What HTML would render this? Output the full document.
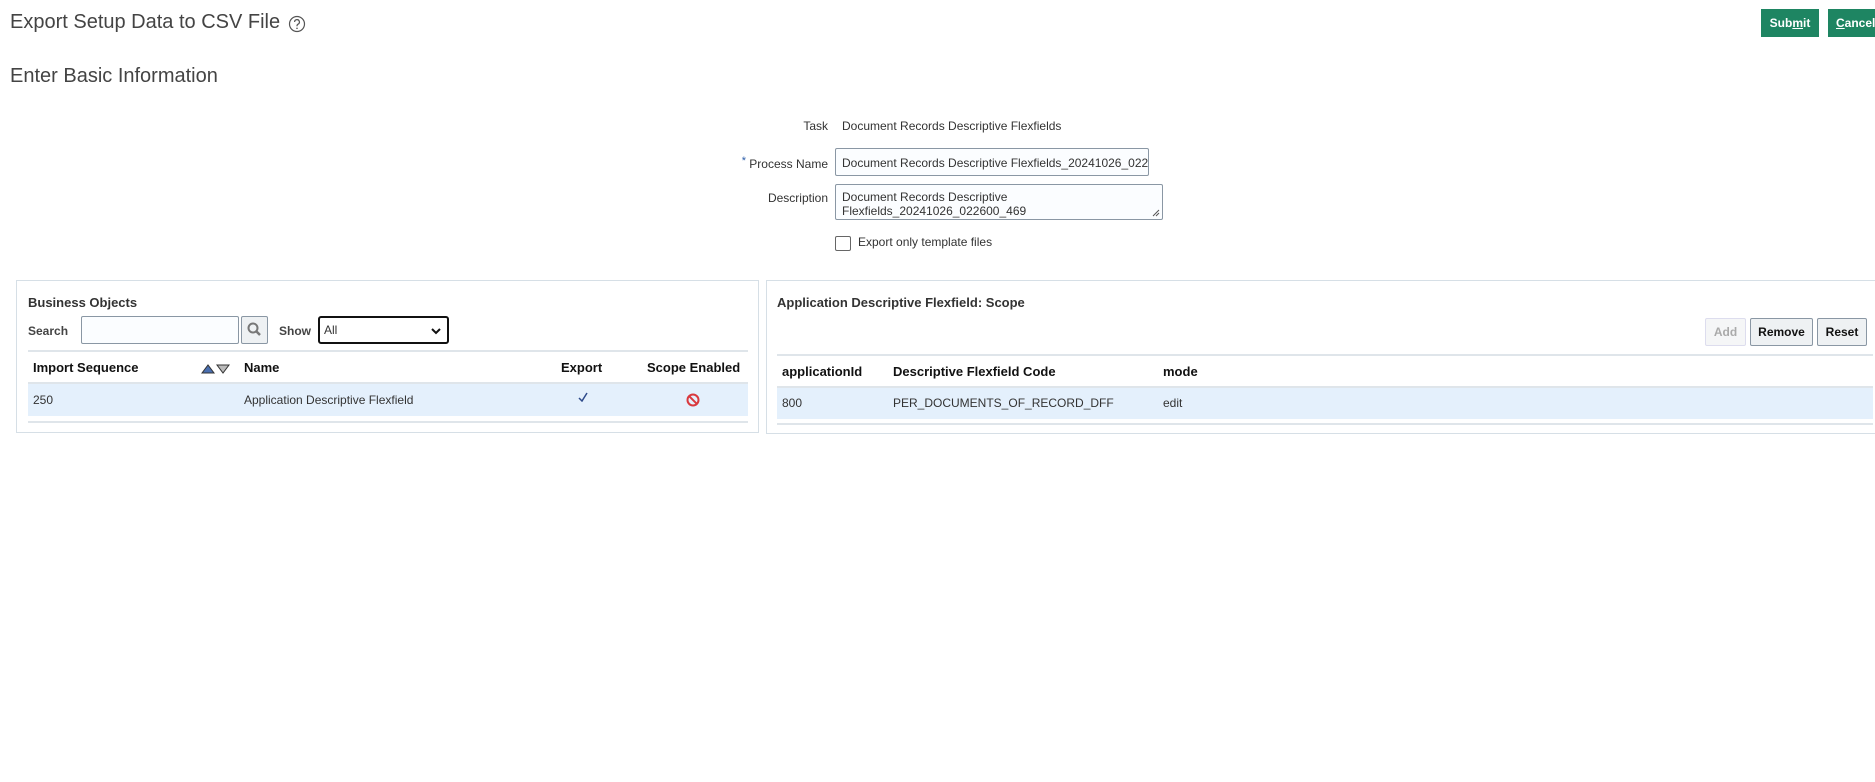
<!DOCTYPE html>
<html><head><meta charset="utf-8"><style>
*{box-sizing:border-box;margin:0;padding:0}
body{width:1875px;height:782px;background:#fff;font-family:"Liberation Sans",Arial,sans-serif;color:#333;position:relative;overflow:hidden;font-size:12px}
.a{position:absolute;white-space:nowrap}
.h1{font-size:20px;color:#444}
.btn{position:absolute;background:#1e8562;color:#fff;font-weight:bold;font-size:13px;height:28px;line-height:28px;text-align:center}
.lbl{font-size:12px;color:#333}
.inp{position:absolute;border:1px solid #8a97a4;background:#fbfdff;border-radius:2px}
.panel{position:absolute;border:1px solid #d6dfe6}
.hl{position:absolute;height:2px;background:#dfe5ea}
.th{font-weight:bold;font-size:13px;color:#111}
.sbtn{position:absolute;height:28px;line-height:26px;border:1px solid #8a97a4;background:#eef1f3;font-weight:bold;font-size:12px;color:#111;text-align:center;border-radius:2px}
</style></head><body>
<div class="a h1" style="left:10px;top:11px">Export Setup Data to CSV File</div>
<svg class="a" style="left:288px;top:15px" width="18" height="18" viewBox="0 0 18 18"><circle cx="9" cy="9" r="7.5" fill="none" stroke="#555" stroke-width="1.2"/><path d="M6.6 7a2.4 2.4 0 1 1 3.4 2.2c-.7.4-1 .8-1 1.6v.4" fill="none" stroke="#555" stroke-width="1.2"/><circle cx="9" cy="13.3" r=".8" fill="#555"/></svg>
<div class="btn" style="left:1761px;top:9px;width:58px;font-size:12px">Sub<u>m</u>it</div>
<div class="btn" style="left:1828px;top:9px;width:60px;text-align:left;padding-left:8px;font-size:12px"><u>C</u>ancel</div>
<div class="a h1" style="left:10px;top:65px">Enter Basic Information</div>

<div class="a lbl" style="right:1047px;top:119px">Task</div>
<div class="a" style="left:842px;top:119px">Document Records Descriptive Flexfields</div>
<div class="a lbl" style="right:1047px;top:155px"><span style="color:#2a5ca8;vertical-align:4px;font-size:11px">*</span> Process Name</div>
<div class="inp" style="left:835px;top:148px;width:314px;height:28px;overflow:hidden"><div class="a" style="left:6px;top:7px">Document Records Descriptive Flexfields_20241026_022600_469</div></div>
<div class="a lbl" style="right:1047px;top:191px">Description</div>
<div class="inp" style="left:835px;top:184px;width:328px;height:36px"><div class="a" style="left:6px;top:5px;line-height:14px">Document Records Descriptive<br>Flexfields_20241026_022600_469</div>
<svg class="a" style="right:2px;bottom:2px" width="8" height="8"><path d="M1 7L7 1M4 7L7 4" stroke="#555"/></svg></div>
<div class="a" style="left:835px;top:236px;width:16px;height:15px;border:1px solid #666;border-radius:2px;background:#fff"></div>
<div class="a" style="left:858px;top:235px">Export only template files</div>

<div class="panel" style="left:16px;top:280px;width:743px;height:153px">
<div class="a" style="left:11px;top:14px;font-weight:bold;font-size:13px;color:#333">Business Objects</div>
<div class="a" style="left:11px;top:43px;font-weight:bold;font-size:12px;color:#444">Search</div>
<div class="inp" style="left:64px;top:35px;width:158px;height:28px"></div>
<div class="a" style="left:224px;top:35px;width:27px;height:28px;border:1px solid #8a97a4;background:#eef1f3;border-radius:2px"><svg width="25" height="26"><circle cx="11" cy="11" r="4.5" fill="none" stroke="#777" stroke-width="2"/><path d="M14 14l4 4" stroke="#777" stroke-width="2.5"/></svg></div>
<div class="a" style="left:262px;top:43px;font-weight:bold;color:#444">Show</div>
<div class="a" style="left:301px;top:35px;width:131px;height:28px;border:2px solid #111;border-radius:3px"><span class="a" style="left:4px;top:5px">All</span><svg class="a" style="right:6px;top:9px" width="10" height="8"><path d="M1 2l4 4 4-4" fill="none" stroke="#111" stroke-width="2"/></svg></div>
<div class="hl" style="left:11px;top:69px;width:720px"></div>
<div class="a th" style="left:16px;top:79px">Import Sequence</div>
<svg class="a" style="left:184px;top:81px" width="32" height="12"><path d="M1 11L7 3 13 11Z" fill="#4a6fb0" stroke="#333"/><path d="M16 3H28L22 11Z" fill="#bbb" stroke="#333"/></svg>
<div class="a th" style="left:227px;top:79px">Name</div>
<div class="a th" style="left:544px;top:79px">Export</div>
<div class="a th" style="left:630px;top:79px">Scope Enabled</div>
<div class="hl" style="left:11px;top:101px;width:720px"></div>
<div class="a" style="left:11px;top:103px;width:720px;height:32px;background:#e4f0fc"></div>
<div class="a" style="left:16px;top:112px">250</div>
<div class="a" style="left:227px;top:112px">Application Descriptive Flexfield</div>
<svg class="a" style="left:561px;top:111px" width="10" height="10"><path d="M1 6l3 3 5-8" fill="none" stroke="#2d4a8a" stroke-width="1.5"/></svg>
<svg class="a" style="left:669px;top:112px" width="14" height="14"><circle cx="7" cy="7" r="5.5" fill="none" stroke="#d9393e" stroke-width="2"/><path d="M3.2 3.2l7.6 7.6" stroke="#d9393e" stroke-width="2"/></svg>
<div class="hl" style="left:11px;top:140px;width:720px"></div>
</div>

<div class="panel" style="left:766px;top:280px;width:1120px;height:154px">
<div class="a" style="left:10px;top:14px;font-weight:bold;font-size:13px;color:#333">Application Descriptive Flexfield: Scope</div>
<div class="sbtn" style="left:938px;top:37px;width:41px;color:#aaa;border-color:#dde;background:#f5f6f7">Add</div>
<div class="sbtn" style="left:983px;top:37px;width:63px">Remove</div>
<div class="sbtn" style="left:1050px;top:37px;width:50px">Reset</div>
<div class="hl" style="left:10px;top:73px;width:1096px"></div>
<div class="a th" style="left:15px;top:83px">applicationId</div>
<div class="a th" style="left:126px;top:83px">Descriptive Flexfield Code</div>
<div class="a th" style="left:396px;top:83px">mode</div>
<div class="hl" style="left:10px;top:105px;width:1096px"></div>
<div class="a" style="left:10px;top:107px;width:1096px;height:31px;background:#e4f0fc"></div>
<div class="a" style="left:15px;top:115px">800</div>
<div class="a" style="left:126px;top:115px">PER_DOCUMENTS_OF_RECORD_DFF</div>
<div class="a" style="left:396px;top:115px">edit</div>
<div class="hl" style="left:10px;top:142px;width:1096px"></div>
</div>
</body></html>
